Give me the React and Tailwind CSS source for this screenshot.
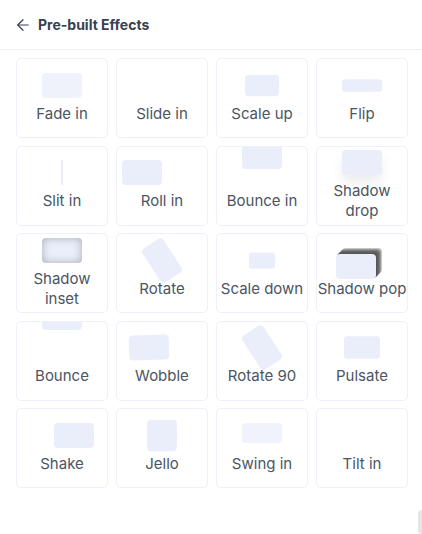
import { ArrowLeft } from 'lucide-react';

const effects = [
  { name: 'Fade in', box: 'bg-[#eff2fb]' },
  { name: 'Slide in', box: 'opacity-0' },
  { name: 'Scale up', box: 'scale-[0.85]' },
  { name: 'Flip', box: 'scale-y-50' },
  { name: 'Slit in', box: 'scale-x-[0.05] bg-[#dfe5f6]' },
  { name: 'Roll in', box: '-translate-x-5' },
  { name: 'Bounce in', box: '-translate-y-[16px]' },
  { name: 'Shadow drop', box: 'shadow-[0_8px_12px_rgba(0,0,0,0.07)]' },
  { name: 'Shadow inset', box: 'bg-[#e3e6ef] shadow-[inset_0_0_8px_rgba(0,0,0,0.28)]' },
  { name: 'Rotate', box: 'rotate-[57deg]' },
  { name: 'Scale down', box: 'scale-[0.65]' },
  {
    name: 'Shadow pop',
    box: '-translate-x-[6px] translate-y-[6px] shadow-[1px_-1px_#555,2px_-2px_#5c5c5c,3px_-3px_#666,4px_-4px_#7a7a7a,5px_-5px_#9a9a9a,6px_-6px_#c4c4c4]',
  },
  { name: 'Bounce', box: '-translate-y-[30px]' },
  { name: 'Wobble', box: '-translate-x-[13px] -rotate-2' },
  { name: 'Rotate 90', box: 'rotate-[57deg]' },
  { name: 'Pulsate', box: 'scale-90' },
  { name: 'Shake', box: 'translate-x-3' },
  { name: 'Jello', box: 'scale-x-75 scale-y-125' },
  { name: 'Swing in', box: 'scale-y-[0.8] origin-top opacity-70' },
  { name: 'Tilt in', box: 'opacity-0' },
];

function EffectCard({ effect }) {
  return (
    <div className="h-[80px] flex flex-col items-center justify-center bg-white border border-[#eef0fa] rounded-[5px] overflow-hidden cursor-pointer">
      <div className={`w-10 h-[25px] shrink-0 rounded-[4px] bg-[#eaeefa] ${effect.box}`} />
      <span className="mt-1.5 text-[15px] leading-5 text-center text-[#4b5563]">{effect.name}</span>
    </div>
  );
}

export default function App() {
  return (
    <div className="relative h-[534px] bg-white overflow-hidden" style={{ fontFamily: 'Inter, "Noto Sans", sans-serif' }}>
      <div className="h-[50px] flex items-center gap-1.5 px-[14px] border-b border-[#eef0f5]">
        <ArrowLeft className="w-[18px] h-[18px] text-[#374151]" strokeWidth={1.6} />
        <h1 className="text-[14px] font-bold text-[#374151]">Pre-built Effects</h1>
      </div>

      <div className="grid grid-cols-4 gap-x-2 gap-y-[7.5px] w-[392px] ml-4 mt-2">
        {effects.map((effect) => (
          <EffectCard key={effect.name} effect={effect} />
        ))}
      </div>

      <div className="absolute right-0 bottom-0 w-[4px] h-[24px] bg-[#e6e6e6] rounded-l-sm" />
    </div>
  );
}
